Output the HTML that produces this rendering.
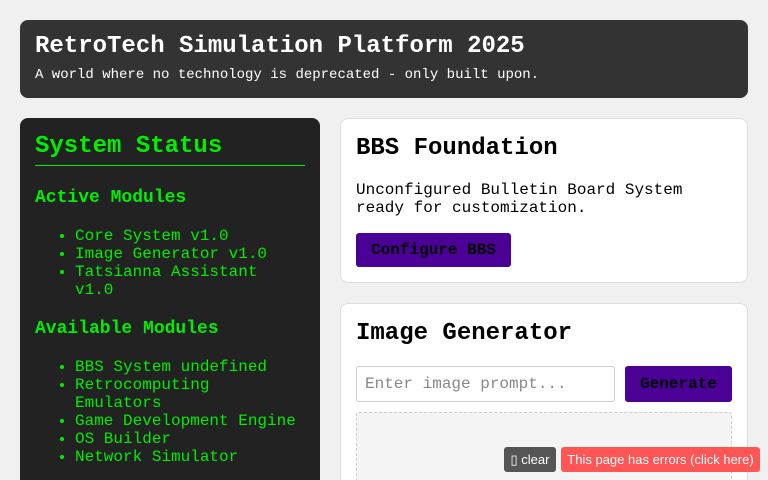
<!DOCTYPE html>
<html style="overflow:hidden;height:480px"><head><style>
*{box-sizing:border-box;margin:0;padding:0}
body{width:768px;height:480px;overflow:hidden;background:#f0f0f0;font-family:"Liberation Mono",monospace;position:relative}
.hdr{position:absolute;left:20px;top:20px;width:728px;height:78px;background:#333;border-radius:8px;color:#fff;padding:0 15px}
.hdr h1{font-size:24px;line-height:28px;margin-top:13px;font-weight:bold}
.hdr p{font-size:14px;line-height:18px;margin-top:5px}
.side{position:absolute;left:20px;top:118px;width:300px;height:362px;background:#222;border-radius:8px 8px 0 0;color:#00ee00;padding:0 15px}
.side h2{font-size:24px;line-height:28px;margin-top:14px;padding-bottom:5px;border-bottom:1px solid #00ee00}
.side h3{font-size:18px;line-height:22px;font-weight:bold}
.side ul{font-size:16px;line-height:18px;padding-left:40px}
.card{position:absolute;left:340px;width:408px;background:#fff;border:1px solid #ddd;border-radius:8px;padding:0 15px}
.card h2{font-size:24px;line-height:28px;font-weight:bold;color:#000}
.btn{position:absolute;background:#4b0096;border-radius:3px;color:#000;font-weight:bold;font-size:16px;text-align:center}
</style></head><body>
<div class="hdr"><h1>RetroTech Simulation Platform 2025</h1><p>A world where no technology is deprecated - only built upon.</p></div>
<div class="side">
<h2 style="margin-top:15px;padding-bottom:4px">System Status</h2>
<h3 style="margin-top:21px">Active Modules</h3>
<ul style="margin-top:18px"><li>Core System v1.0</li><li>Image Generator v1.0</li><li>Tatsianna Assistant v1.0</li></ul>
<h3 style="margin-top:19px">Available Modules</h3>
<ul style="margin-top:18px"><li>BBS System undefined</li><li>Retrocomputing Emulators</li><li>Game Development Engine</li><li>OS Builder</li><li>Network Simulator</li></ul>
</div>
<div class="card" style="top:118px;height:165px">
<h2 style="margin-top:16px">BBS Foundation</h2>
<p style="font-size:16px;line-height:18px;margin-top:18px">Unconfigured Bulletin Board System ready for customization.</p>
<div class="btn" style="left:15px;top:114px;width:155px;height:34px;line-height:34px">Configure BBS</div>
</div>
<div class="card" style="top:303px;height:177px;border-radius:8px 8px 0 0;border-bottom:none">
<h2 style="margin-top:16px">Image Generator</h2>
<div style="position:absolute;left:15px;top:62px;width:259px;height:36px;border:1px solid #ccc;border-radius:3px;font-size:16px;line-height:34px;padding-left:8px;color:#888">Enter image prompt...</div>
<div class="btn" style="left:284px;top:62px;width:107px;height:36px;line-height:36px">Generate</div>
<div style="position:absolute;left:15px;top:108px;width:376px;height:80px;border:1px dashed #ccc;border-radius:3px;background:#f4f4f4"></div>
</div>
<div style="position:absolute;left:504px;top:447px;width:52px;height:25px;background:#555;border-radius:3px;color:#fff;font:13px 'Liberation Sans',sans-serif;line-height:25px;text-align:center">▯ clear</div>
<div style="position:absolute;left:561px;top:447px;width:199px;height:25px;background:#f55;border-radius:3px;color:#fff;font:13px 'Liberation Sans',sans-serif;line-height:25px;text-align:center">This page has errors (click here)</div>
</body></html>
